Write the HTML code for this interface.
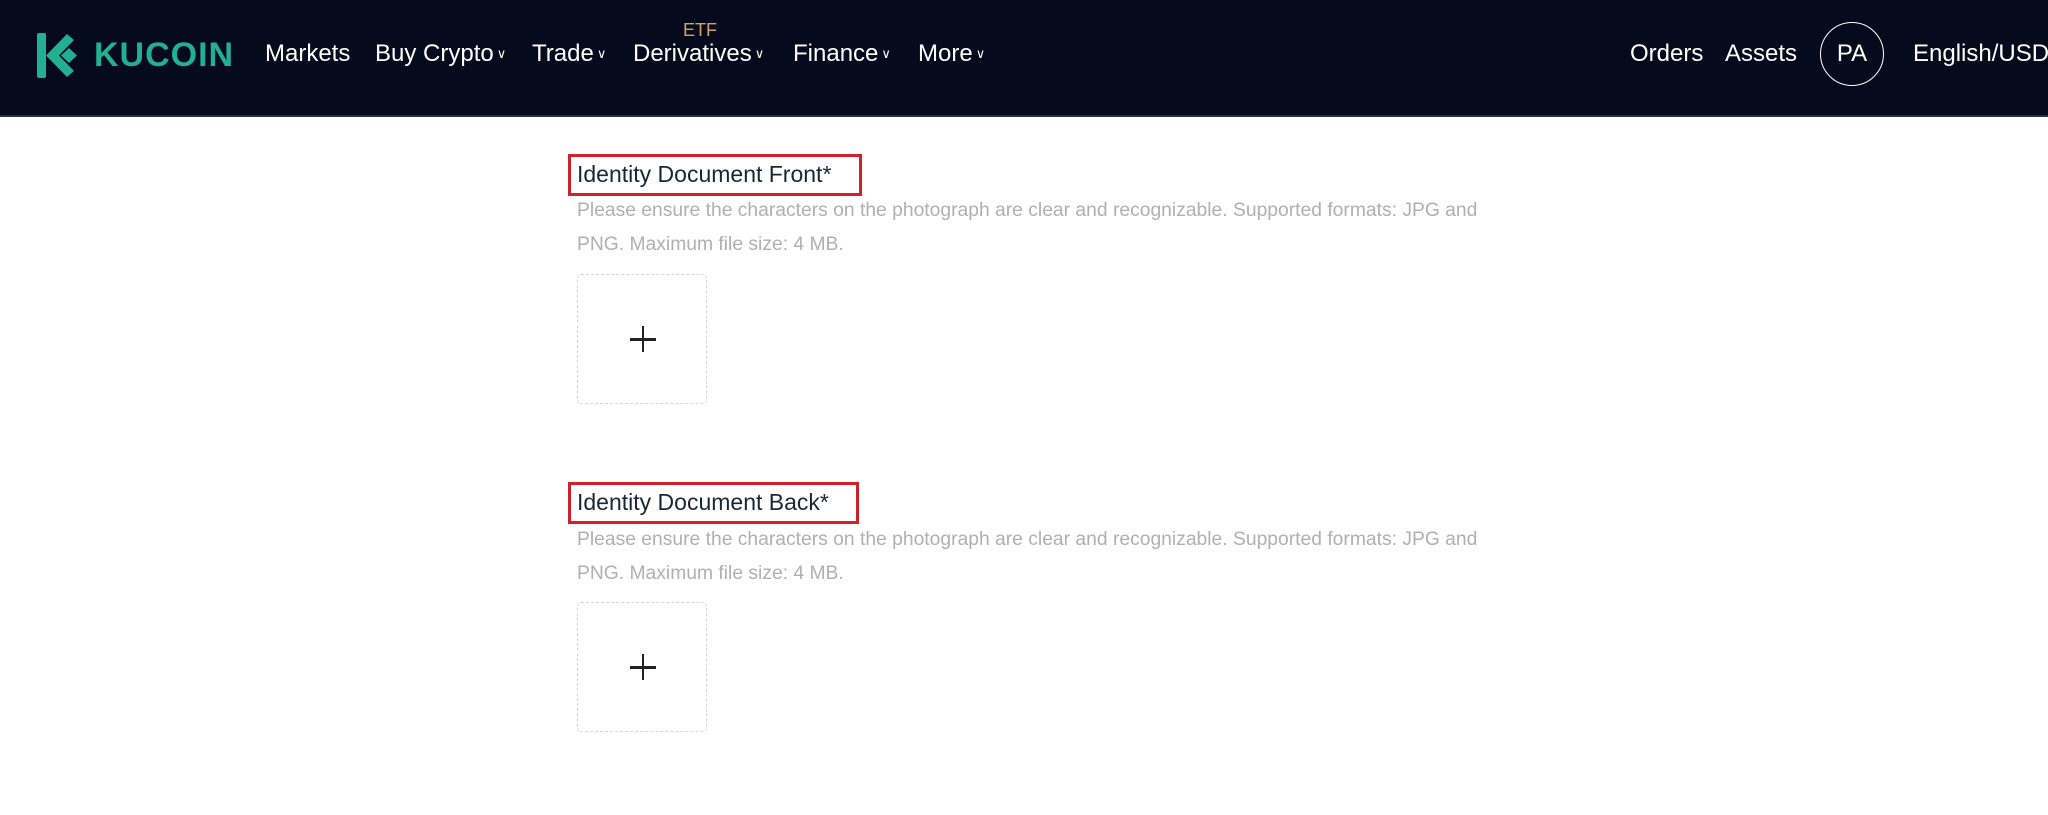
<!DOCTYPE html>
<html><head><meta charset="utf-8"><style>
body{margin:0;width:2048px;height:815px;background:#fff;font-family:"Liberation Sans",sans-serif;position:relative;overflow:hidden}
.hdr{position:absolute;left:0;top:0;width:2048px;height:117px;background:#050a1c;border-bottom:2px solid #2b3044;box-sizing:border-box}
.t{position:absolute;white-space:nowrap;line-height:1}
.nav{color:#fff;font-size:24px;top:42px}
.car{font-size:13px;margin-left:3px;vertical-align:3px}
.lbl{color:#1e2433;font-size:23px}
.desc{color:#b0b0b0;font-size:19.3px}
.box{position:absolute;left:577px;width:130px;height:130px;border:1.5px dashed #d6d6d6;border-radius:4px;box-sizing:border-box}
.box:before{content:"";position:absolute;left:52px;top:63px;width:26px;height:2.5px;background:#222}
.box:after{content:"";position:absolute;left:63.5px;top:51px;width:2.5px;height:26px;background:#222}
.red{position:absolute;border:3px solid #d0222a;box-sizing:border-box}
</style></head><body>
<div class="hdr">
<svg style="position:absolute;left:37px;top:33px" width="44" height="45" viewBox="0 0 44 45"><g fill="#23af91"><rect x="0" y="0" width="9" height="45" rx="2"/><path d="M9 22.5 L30 1 L37 7 L22 22.5 L37 38 L30 44 Z"/><path d="M24 22.5 L32 15 L40 22.5 L32 30 Z"/></g></svg>
<div class="t" style="left:94px;top:38px;font-size:34px;font-weight:bold;color:#23af91;letter-spacing:1px">KUCOIN</div>
<div class="t nav" style="left:265px">Markets</div>
<div class="t nav" style="left:375px">Buy Crypto<span class="car">∨</span></div>
<div class="t nav" style="left:532px">Trade<span class="car">∨</span></div>
<div class="t" style="left:683px;top:21px;font-size:18px;color:#d8a25c">ETF</div>
<div class="t nav" style="left:633px">Derivatives<span class="car">∨</span></div>
<div class="t nav" style="left:793px">Finance<span class="car">∨</span></div>
<div class="t nav" style="left:918px">More<span class="car">∨</span></div>
<div class="t nav" style="left:1630px">Orders</div>
<div class="t nav" style="left:1725px">Assets</div>
<div style="position:absolute;left:1820px;top:22px;width:64px;height:64px;border:1.5px solid #fff;border-radius:50%;box-sizing:border-box;color:#fff;font-size:24px;text-align:center;line-height:62px">PA</div>
<div class="t nav" style="left:1913px">English/USD</div>
</div>

<div class="red" style="left:568px;top:154px;width:294px;height:42px"></div>
<div class="t lbl" style="left:577px;top:163px">Identity Document Front*</div>
<div class="t desc" style="left:577px;top:201px">Please ensure the characters on the photograph are clear and recognizable. Supported formats: JPG and</div>
<div class="t desc" style="left:577px;top:235px">PNG. Maximum file size: 4 MB.</div>
<div class="box" style="top:274px"></div>

<div class="red" style="left:568px;top:482px;width:291px;height:42px"></div>
<div class="t lbl" style="left:577px;top:491px">Identity Document Back*</div>
<div class="t desc" style="left:577px;top:530px">Please ensure the characters on the photograph are clear and recognizable. Supported formats: JPG and</div>
<div class="t desc" style="left:577px;top:564px">PNG. Maximum file size: 4 MB.</div>
<div class="box" style="top:602px"></div>
</body></html>
